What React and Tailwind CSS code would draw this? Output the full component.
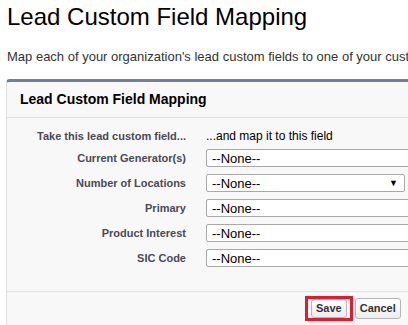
import React from 'react';

const rows = [
  { label: 'Current Generator(s)', w: 'w-[250px]' },
  { label: 'Number of Locations', w: 'w-[199px]', arrow: true },
  { label: 'Primary', w: 'w-[250px]' },
  { label: 'Product Interest', w: 'w-[250px]' },
  { label: 'SIC Code', w: 'w-[250px]' },
];

const FakeSelect = ({ w, arrow }) => (
  <div className={`${w} h-[18px] shrink-0 flex items-center justify-between bg-white border border-[#a9a9a9] rounded-[2px] pl-[5px] pr-[4px] text-[13px] leading-none text-black`}>
    <span>--None--</span>
    {arrow && <span className="text-[9px] mr-[2px]">▼</span>}
  </div>
);

export default function App() {
  return (
    <div className="w-[408px] h-[325px] overflow-hidden bg-white font-['Liberation_Sans',Arial,sans-serif]">
      <h1 className="pl-[7px] pt-[3px] text-[24px] leading-[28px] text-black whitespace-nowrap">Lead Custom Field Mapping</h1>
      <p className="pl-[7px] mt-[18px] text-[13px] leading-[16px] text-[#333] whitespace-nowrap overflow-hidden">
        Map each of your organization's lead custom fields to one of your custom fields
      </p>
      <div className="ml-[6px] mt-[14px] w-[440px] bg-[#f8f8f8] border-t-[3px] border-t-[#747e96] border-l border-l-[#e0e0e0] rounded-tl-[4px]">
        <div className="h-[36px] flex items-center pl-[13px] border-b border-[#e0e0e0]">
          <h2 className="text-[14px] font-bold text-black">Lead Custom Field Mapping</h2>
        </div>
        <div className="pt-[8px] pb-[20px]">
          <div className="flex items-center h-[20px]">
            <div className="w-[179px] shrink-0 text-right text-[11px] font-bold text-[#4a4a56]">Take this lead custom field...</div>
            <div className="ml-[20px] text-[12px] text-black">...and map it to this field</div>
          </div>
          {rows.map((r) => (
            <div key={r.label} className="flex items-start h-[25px] pt-[3px]">
              <div className="w-[179px] shrink-0 pt-[1px] text-right text-[11px] font-bold text-[#4a4a56]">{r.label}</div>
              <div className="ml-[20px] shrink-0">
                <FakeSelect w={r.w} arrow={r.arrow} />
              </div>
            </div>
          ))}
        </div>
        <div className="border-t border-[#e0e0e0] pt-[4px] h-[40px] flex items-start">
          <div className="ml-[298px] border-[3px] border-[#e8192c] px-[3px] flex items-center">
            <button className="h-[19px] px-[4px] text-[11px] font-bold text-[#333] border border-[#b5b5b5] rounded-[3px] bg-gradient-to-b from-white to-[#ededed]">Save</button>
          </div>
          <button className="ml-[2px] mt-[2px] h-[21px] px-[4px] text-[11px] font-bold text-[#333] border border-[#b5b5b5] rounded-[3px] bg-gradient-to-b from-white to-[#ededed]">Cancel</button>
        </div>
      </div>
    </div>
  );
}
